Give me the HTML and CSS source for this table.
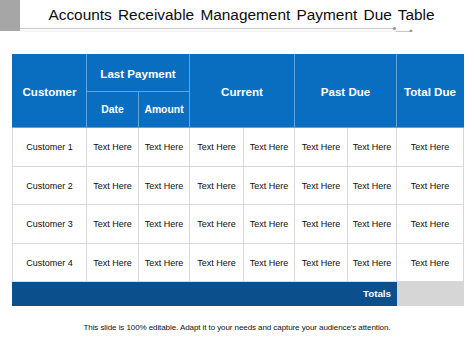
FILE: index.html
```html
<!DOCTYPE html>
<html>
<head>
<meta charset="utf-8">
<link rel="stylesheet" href="styles.css">
</head>
<body>
<div class="slide">
  <header class="head">
    <div class="accent"></div>
    <div class="title-area">
      <h1 class="title">Accounts Receivable Management Payment Due Table</h1>
      <svg class="rule" width="454" height="6" viewBox="0 0 454 6">
        <line x1="0" y1="2.5" x2="374" y2="2.5" stroke="#c9c9c9" stroke-width="1"/>
        <line x1="0" y1="5" x2="391" y2="5" stroke="#ececec" stroke-width="1"/>
        <circle cx="374.5" cy="2.5" r="1.6" fill="#9a9a9a"/>
        <line x1="376" y1="5.5" x2="391" y2="5.5" stroke="#c9c9c9" stroke-width="1"/>
        <circle cx="391" cy="5" r="1.5" fill="#9a9a9a"/>
      </svg>
    </div>
  </header>

  <table class="grid">
    <colgroup>
      <col class="c-cust"><col class="c-date"><col class="c-amt"><col class="c-cur1"><col class="c-cur2"><col class="c-pd1"><col class="c-pd2"><col class="c-tot">
    </colgroup>
    <thead>
      <tr class="h1row">
        <th rowspan="2" class="big">Customer</th>
        <th colspan="2" class="big">Last Payment</th>
        <th rowspan="2" colspan="2" class="big">Current</th>
        <th rowspan="2" colspan="2" class="big">Past Due</th>
        <th rowspan="2" class="big">Total Due</th>
      </tr>
      <tr class="h2row">
        <th class="small">Date</th>
        <th class="small">Amount</th>
      </tr>
    </thead>
    <tbody>
      <tr class="r-a"><td>Customer 1</td><td>Text Here</td><td>Text Here</td><td>Text Here</td><td>Text Here</td><td>Text Here</td><td>Text Here</td><td>Text Here</td></tr>
      <tr class="r-b"><td>Customer 2</td><td>Text Here</td><td>Text Here</td><td>Text Here</td><td>Text Here</td><td>Text Here</td><td>Text Here</td><td>Text Here</td></tr>
      <tr class="r-a"><td>Customer 3</td><td>Text Here</td><td>Text Here</td><td>Text Here</td><td>Text Here</td><td>Text Here</td><td>Text Here</td><td>Text Here</td></tr>
      <tr class="r-b"><td>Customer 4</td><td>Text Here</td><td>Text Here</td><td>Text Here</td><td>Text Here</td><td>Text Here</td><td>Text Here</td><td>Text Here</td></tr>
    </tbody>
    <tfoot>
      <tr class="totals">
        <td colspan="7" class="tot-label">Totals</td>
        <td class="tot-val"></td>
      </tr>
    </tfoot>
  </table>

  <p class="note">This slide is 100% editable. Adapt it to your needs and capture your audience's attention.</p>
</div>
</body>
</html>
```

FILE: styles.css
```css
html, body {
  margin: 0;
  padding: 0;
  background: #ffffff;
}

.slide {
  width: 474px;
  height: 355px;
  font-family: "Liberation Sans", Arial, sans-serif;
  color: #1a1a1a;
}

.head {
  display: flex;
  align-items: flex-start;
  height: 32px;
}

.accent {
  width: 20px;
  height: 31px;
  background: #a6a6a6;
  flex: none;
}

.title-area {
  width: 454px;
  display: flex;
  flex-direction: column;
}

.title {
  margin: 0;
  height: 26px;
  padding-top: 6px;
  box-sizing: border-box;
  font-size: 15.4px;
  line-height: 18px;
  font-weight: normal;
  word-spacing: 2px;
  text-align: center;
  padding-right: 11px;
  color: #0d0d0d;
}

.rule {
  display: block;
}

.grid {
  margin: 22px 0 0 12px;
  width: 451px;
  table-layout: fixed;
  border-collapse: collapse;
}

.c-cust { width: 74px; }
.c-date { width: 52px; }
.c-amt { width: 51px; }
.c-cur1 { width: 54px; }
.c-cur2 { width: 51px; }
.c-pd1 { width: 53px; }
.c-pd2 { width: 49px; }
.c-tot { width: 67px; }

.grid th {
  background: #0a6ec0;
  color: #ffffff;
  font-weight: bold;
  border: 1px solid #5ea6e0;
  padding: 0;
  text-align: center;
}

.grid thead tr:first-child th { border-top-color: #0a6ec0; }
.grid thead th:first-child { border-left-color: #0a6ec0; }
.grid thead th:last-child { border-right-color: #0a6ec0; }

.h1row { height: 37px; }
.h2row { height: 36px; }

.big { font-size: 11.6px; }
.small { font-size: 10.4px; }

.grid td {
  border: 1px solid #d9d9d9;
  font-size: 9px;
  text-align: center;
  padding: 0;
  color: #0d0d0d;
  white-space: nowrap;
}

.r-a { height: 39px; }
.r-b { height: 38px; }

.totals { height: 24px; }

.grid .tot-label {
  background: #0b4f8c;
  border-color: #0b4f8c;
  color: #ffffff;
  font-weight: bold;
  font-size: 9.8px;
  text-align: right;
  padding-right: 5px;
}

.grid .tot-val {
  background: #d6d6d6;
  border-color: #d6d6d6;
}

.note {
  margin: 17px 0 0 0;
  font-size: 8px;
  line-height: 10px;
  text-align: center;
  color: #111;
  letter-spacing: -0.08px;
}
```
